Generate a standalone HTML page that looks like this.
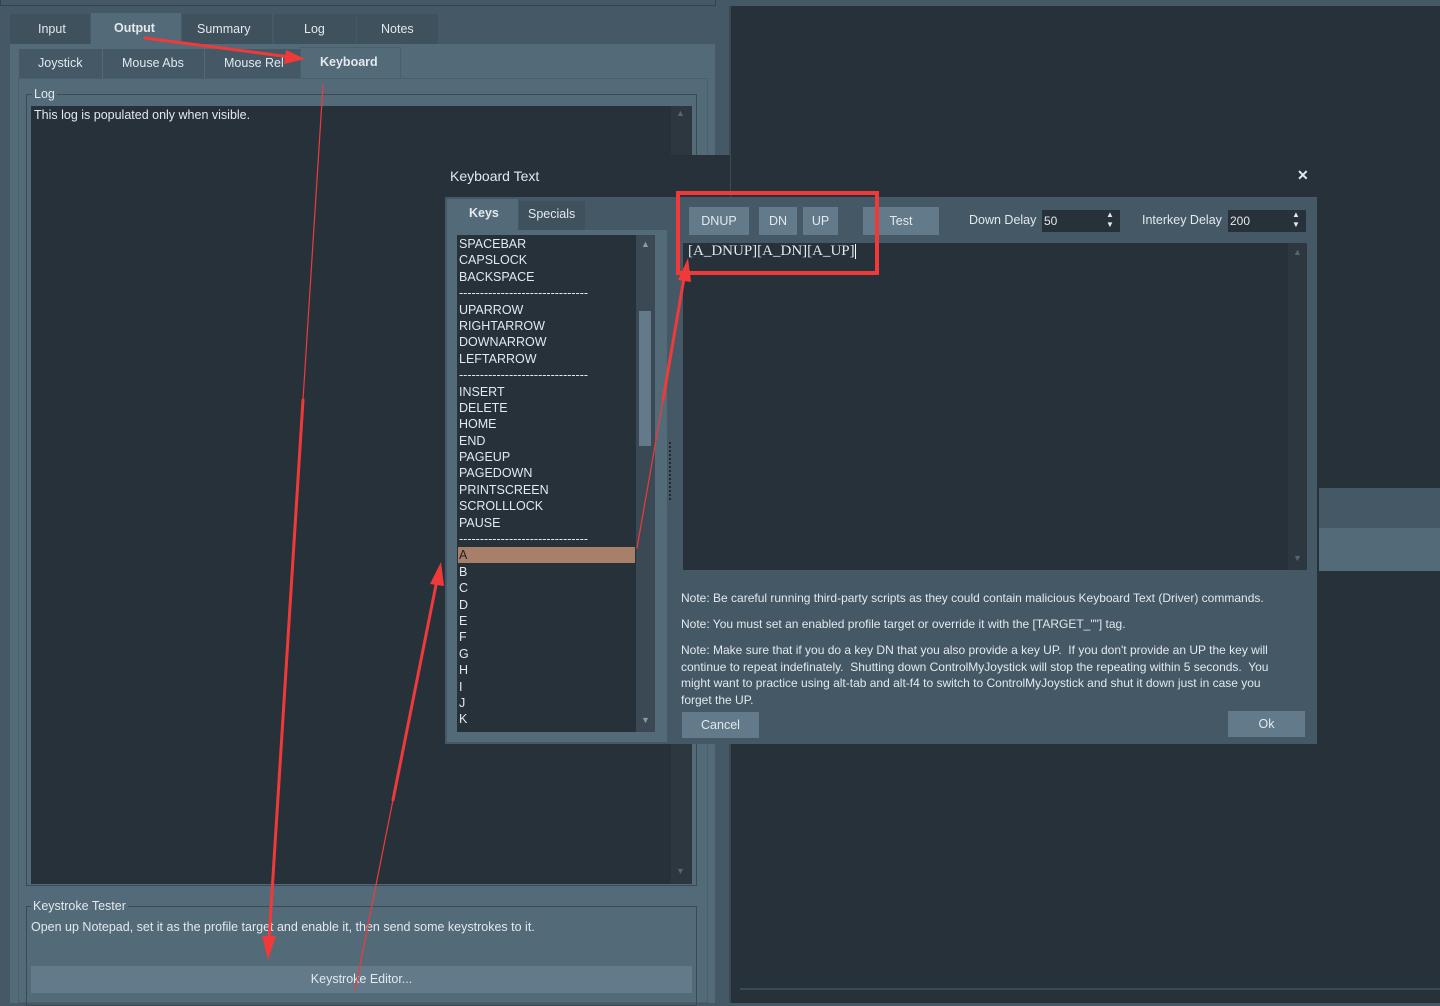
<!DOCTYPE html>
<html><head><meta charset="utf-8"><style>
*{margin:0;padding:0;box-sizing:border-box}
body{width:1440px;height:1003px;position:relative;overflow:hidden;background:#455866;font-family:"Liberation Sans",sans-serif;font-size:12.5px;color:#e3e9ed}
.a{position:absolute}
.dk{background:#27313a}
.lt{background:#536a78}
.md{background:#455866}
.btn{position:absolute;background:#627a89;color:#e3e9ed;text-align:center;font-size:12.5px}
.t{position:absolute;white-space:nowrap}
.list div{height:16.4px;line-height:16.4px;padding-left:2px;font-size:12.5px;white-space:nowrap}
.note{font-size:12px;line-height:16.5px}
</style></head><body>
<div class="a" style="left:0;top:0;width:716px;height:6px;border:1px solid #33424d;border-top:none;background:#455866"></div>
<div class="a" style="left:10px;top:14px;width:80px;height:30px;background:#3f515d"></div>
<div class="a lt" style="left:91px;top:13px;width:90px;height:31px"></div>
<div class="a" style="left:182px;top:14px;width:90px;height:30px;background:#3f515d"></div>
<div class="a" style="left:274px;top:14px;width:82px;height:30px;background:#3f515d"></div>
<div class="a" style="left:357px;top:14px;width:81px;height:30px;background:#3f515d"></div>
<div class="t" style="left:38px;top:22px">Input</div>
<div class="t" style="left:114px;top:21px;font-weight:bold">Output</div>
<div class="t" style="left:197px;top:22px">Summary</div>
<div class="t" style="left:304px;top:22px">Log</div>
<div class="t" style="left:381px;top:22px">Notes</div>
<div class="a lt" style="left:10px;top:44px;width:705px;height:959px"></div>
<div class="a" style="left:19px;top:49px;width:83px;height:29px;background:#455866"></div>
<div class="a" style="left:103px;top:49px;width:101px;height:29px;background:#455866"></div>
<div class="a" style="left:205px;top:49px;width:95px;height:29px;background:#455866"></div>
<div class="a lt" style="left:300px;top:47px;width:101px;height:32px;border:1px solid #4a5f6c;border-bottom:none"></div>
<div class="t" style="left:38px;top:56px">Joystick</div>
<div class="t" style="left:122px;top:56px">Mouse Abs</div>
<div class="t" style="left:224px;top:56px">Mouse Rel</div>
<div class="t" style="left:320px;top:55px;font-weight:bold">Keyboard</div>
<div class="a" style="left:18px;top:78px;width:690px;height:925px;border:1px solid #4a5f6c"></div>
<div class="a" style="left:26px;top:94px;width:671px;height:792px;border:1px solid #3a4a55"></div>
<div class="t lt" style="left:32px;top:87px;padding:0 2px">Log</div>
<div class="a dk" style="left:31px;top:106px;width:661px;height:778px"></div>
<div class="a" style="left:671px;top:106px;width:21px;height:778px;background:#2c3740"></div>
<div class="t" style="left:676px;top:108px;color:#56656f;font-size:9px">▲</div>
<div class="t" style="left:676px;top:866px;color:#56656f;font-size:9px">▼</div>
<div class="t" style="left:34px;top:108px">This log is populated only when visible.</div>
<div class="a" style="left:26px;top:906px;width:671px;height:100px;border:1px solid #3a4a55"></div>
<div class="t lt" style="left:31px;top:899px;padding:0 2px">Keystroke Tester</div>
<div class="t" style="left:31px;top:920px">Open up Notepad, set it as the profile target and enable it, then send some keystrokes to it.</div>
<div class="btn" style="left:31px;top:966px;width:661px;height:27px;line-height:27px">Keystroke Editor...</div>

<div class="a md" style="left:716px;top:0;width:724px;height:1003px"></div>
<div class="a" style="left:729px;top:6px;width:711px;height:997px;background:#27313a;border-left:2px solid #3a4954"></div>
<div class="a" style="left:740px;top:988px;width:700px;height:2px;background:#3a4954"></div>
<div class="a md" style="left:1319px;top:488px;width:121px;height:40px"></div>
<div class="a lt" style="left:1319px;top:528px;width:121px;height:43px"></div>

<div class="a dk" style="left:445px;top:155px;width:285px;height:42px"></div>
<div class="t" style="left:450px;top:168px;font-size:14px">Keyboard Text</div>
<div class="t" style="left:1297px;top:167px;font-size:14px;font-weight:bold">✕</div>
<div class="a md" style="left:445px;top:197px;width:872px;height:547px"></div>
<div class="a lt" style="left:447px;top:199px;width:71px;height:31px"></div>
<div class="a" style="left:519px;top:201px;width:66px;height:29px;background:#3f515d"></div>
<div class="t" style="left:469px;top:206px;font-weight:bold;font-size:12.5px">Keys</div>
<div class="t" style="left:528px;top:207px;font-size:12.5px">Specials</div>
<div class="a lt" style="left:447px;top:230px;width:220px;height:512px"></div>
<div class="a dk" style="left:457px;top:235px;width:179px;height:497px"></div>
<div class="a" style="left:636px;top:235px;width:19px;height:497px;background:#3a4953"></div>
<div class="a" style="left:639px;top:311px;width:12px;height:135px;background:#627a89"></div>
<div class="t" style="left:641px;top:239px;color:#8a9aa5;font-size:9px">▲</div>
<div class="t" style="left:641px;top:715px;color:#8a9aa5;font-size:9px">▼</div>
<div class="a" style="left:458px;top:547px;width:177px;height:16px;background:#a8806a"></div>
<div class="a list" style="left:457px;top:236px;width:179px">
<div>SPACEBAR</div><div>CAPSLOCK</div><div>BACKSPACE</div><div>-------------------------------</div>
<div>UPARROW</div><div>RIGHTARROW</div><div>DOWNARROW</div><div>LEFTARROW</div><div>-------------------------------</div>
<div>INSERT</div><div>DELETE</div><div>HOME</div><div>END</div><div>PAGEUP</div><div>PAGEDOWN</div><div>PRINTSCREEN</div><div>SCROLLLOCK</div><div>PAUSE</div><div>-------------------------------</div>
<div style="color:#222">A</div><div>B</div><div>C</div><div>D</div><div>E</div><div>F</div><div>G</div><div>H</div><div>I</div><div>J</div><div>K</div>
</div>
<div class="a" style="left:669px;top:442px;width:2px;height:58px;border-left:2px dotted #1f282f"></div>
<div class="btn" style="left:689px;top:207px;width:60px;height:28px;line-height:28px">DNUP</div>
<div class="btn" style="left:759px;top:207px;width:38px;height:28px;line-height:28px">DN</div>
<div class="btn" style="left:803px;top:207px;width:35px;height:28px;line-height:28px">UP</div>
<div class="btn" style="left:863px;top:207px;width:76px;height:28px;line-height:28px">Test</div>
<div class="t" style="left:969px;top:213px">Down Delay</div>
<div class="a dk" style="left:1042px;top:210px;width:78px;height:22px"></div>
<div class="t" style="left:1044px;top:214px;font-size:12px">50</div>
<div class="t" style="left:1106px;top:210px;font-size:8px;line-height:10px">▲<br>▼</div>
<div class="t" style="left:1142px;top:213px">Interkey Delay</div>
<div class="a dk" style="left:1228px;top:210px;width:78px;height:22px"></div>
<div class="t" style="left:1230px;top:214px;font-size:12px">200</div>
<div class="t" style="left:1292px;top:210px;font-size:8px;line-height:10px">▲<br>▼</div>
<div class="a dk" style="left:683px;top:243px;width:624px;height:327px"></div>
<div class="a" style="left:1288px;top:243px;width:19px;height:327px;background:#2c3740"></div>
<div class="t" style="left:1293px;top:247px;color:#56656f;font-size:9px">▲</div>
<div class="t" style="left:1293px;top:553px;color:#56656f;font-size:9px">▼</div>
<div class="t" style="left:688px;top:243px;font-family:'Liberation Serif',serif;font-size:15px">[A_DNUP][A_DN][A_UP]<span style="display:inline-block;width:1px;height:15px;background:#fff;vertical-align:middle"></span></div>
<div class="t note" style="left:681px;top:590px">Note: Be careful running third-party scripts as they could contain malicious Keyboard Text (Driver) commands.</div>
<div class="t note" style="left:681px;top:616px">Note: You must set an enabled profile target or override it with the [TARGET_""] tag.</div>
<div class="t note" style="left:681px;top:642px">Note: Make sure that if you do a key DN that you also provide a key UP.&nbsp; If you don't provide an UP the key will<br>continue to repeat indefinately.&nbsp; Shutting down ControlMyJoystick will stop the repeating within 5 seconds.&nbsp; You<br>might want to practice using alt-tab and alt-f4 to switch to ControlMyJoystick and shut it down just in case you<br>forget the UP.</div>
<div class="btn" style="left:682px;top:712px;width:77px;height:26px;line-height:26px">Cancel</div>
<div class="btn" style="left:1228px;top:711px;width:77px;height:26px;line-height:26px">Ok</div>

<svg class="a" style="left:0;top:0" width="1440" height="1003">
<g fill="none" stroke="#f03a3a" stroke-linecap="round">
<rect x="678" y="193" width="199" height="80" stroke-width="4"/>
<line x1="145" y1="38" x2="290" y2="57" stroke-width="3"/>
<line x1="323" y1="85" x2="303" y2="400" stroke-width="1.2"/>
<line x1="303" y1="400" x2="269" y2="940" stroke-width="3"/>
<line x1="355" y1="990" x2="393" y2="800" stroke-width="1.2"/>
<line x1="393" y1="800" x2="437" y2="580" stroke-width="3"/>
<line x1="637" y1="548" x2="663" y2="400" stroke-width="1.2"/>
<line x1="663" y1="400" x2="684" y2="278" stroke-width="3"/>
</g>
<g fill="#f03a3a">
<polygon points="305,59 286,50 284,64"/>
<polygon points="268,960 262,936 276,936"/>
<polygon points="441,562 430,584 444,586"/>
<polygon points="688,258 678,280 691,282"/>
</g>
</svg>
</body></html>
